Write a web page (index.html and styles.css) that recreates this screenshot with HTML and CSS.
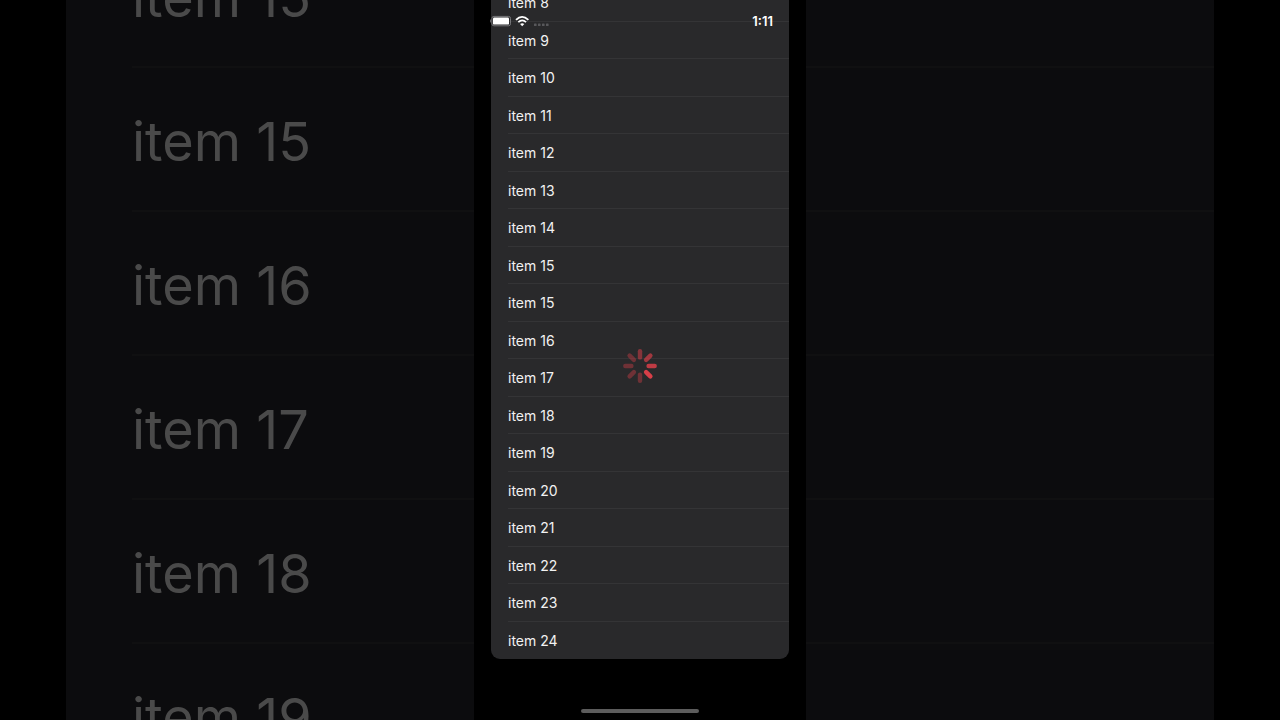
FILE: index.html
```html
<!DOCTYPE html>
<html lang="en">
<head>
    <meta charset="UTF-8">
    <meta name="viewport" content="width=device-width, initial-scale=1">
    <title>List loading</title>
    <link rel="stylesheet" href="styles.css">
</head>
<body>
    <div class="stage">
        <!-- enlarged, dimmed list behind the phone -->
        <ul class="backdrop" aria-hidden="true">
            <li>item 15</li>
            <li>item 15</li>
            <li>item 16</li>
            <li>item 17</li>
            <li>item 18</li>
            <li>item 19</li>
        </ul>

        <main class="phone">
            <ul class="list">
                <li>item 8</li>
                <li>item 9</li>
                <li>item 10</li>
                <li>item 11</li>
                <li>item 12</li>
                <li>item 13</li>
                <li>item 14</li>
                <li>item 15</li>
                <li>item 15</li>
                <li>item 16</li>
                <li>item 17</li>
                <li>item 18</li>
                <li>item 19</li>
                <li>item 20</li>
                <li>item 21</li>
                <li>item 22</li>
                <li>item 23</li>
                <li>item 24</li>
            </ul>

            <div class="status-bar">
                <div class="status-icons">
                    <svg class="battery" width="22" height="12" viewBox="0 0 22 12">
                        <path d="M2 4 Q0 6 2 8 Z" fill="#68686b"/>
                        <rect x="2.9" y="1.4" width="18.6" height="9.4" rx="2" fill="none" stroke="#77777a"/>
                        <rect x="4" y="2.6" width="16" height="7" rx="1.2" fill="#fff"/>
                    </svg>
                    <svg class="wifi" width="14" height="12" viewBox="0 0 14 12">
                        <path d="M1 4.9 Q7 -1.3 13.4 4.9" fill="none" stroke="#fff" stroke-width="1.8"/>
                        <path d="M3.3 7.2 Q7.2 3.5 11.1 7.2" fill="none" stroke="#fff" stroke-width="1.7"/>
                        <path d="M5.1 9 Q7.2 7.3 9.3 9 L7.2 11.2 Z" fill="#fff"/>
                    </svg>
                    <svg class="signal" width="16" height="12" viewBox="0 0 16 12" fill="#58585b">
                        <rect x="1" y="8.4" width="2.6" height="2.6" rx="0.6"/>
                        <rect x="5" y="8.4" width="2.6" height="2.6" rx="0.6"/>
                        <rect x="9" y="8.4" width="2.6" height="2.6" rx="0.6"/>
                        <rect x="13" y="8.4" width="2.6" height="2.6" rx="0.6"/>
                    </svg>
                </div>
                <time>1:11</time>
            </div>

            <svg class="spinner" role="img" aria-label="Loading" viewBox="-17 -17 34 34" stroke="#e0404a" stroke-width="4.4" stroke-linecap="round">
                <path d="M0 -8.6 V-14.7" opacity=".5"/>
                <path d="M0 -8.6 V-14.7" opacity=".65" transform="rotate(45)"/>
                <path d="M0 -8.6 V-14.7" opacity=".82" transform="rotate(90)"/>
                <path d="M0 -8.6 V-14.7" opacity=".96" transform="rotate(135)"/>
                <path d="M0 -8.6 V-14.7" opacity=".38" transform="rotate(180)"/>
                <path d="M0 -8.6 V-14.7" opacity=".38" transform="rotate(225)"/>
                <path d="M0 -8.6 V-14.7" opacity=".38" transform="rotate(270)"/>
                <path d="M0 -8.6 V-14.7" opacity=".38" transform="rotate(315)"/>
            </svg>

            <div class="home-indicator"></div>
        </main>
    </div>
</body>
</html>
```
FILE: styles.css
```css
* {
    box-sizing: border-box;
}
body {
    margin: 0;
    background: #000;
    color: #f2f2f2;
    font-family: Inter, "Liberation Sans", sans-serif;
}
ul {
    list-style: none;
    margin: 0;
    padding: 0;
}
.stage {
    display: grid;
    height: 100vh;
    overflow: hidden;
}
.backdrop,
.phone {
    grid-area: 1 / 1;
}

/* Backdrop */
.backdrop {
    display: grid;
    grid-auto-rows: 144px;
    align-self: start;
    margin: -76px 66px 0;
    background: #0c0c0e;
    color: #4a4a4a;
    font-size: 54px;
}
.backdrop li {
    display: flex;
    align-items: center;
    margin-left: 66px;
    padding-top: 4px;
    border-bottom: 2px solid #101011;
}

/* Phone */
.phone {
    position: relative;
    display: flex;
    flex-direction: column;
    justify-content: flex-end;
    justify-self: center;
    height: 100vh;
    aspect-ratio: 332 / 720;
    padding: 0 17px 61px;
    overflow: hidden;
    background: #000;
}
.list {
    display: grid;
    grid-auto-rows: 38px 37px;
    background: #29292b;
    border-radius: 9px;
    font-size: 14px;
}
.list li {
    display: flex;
    align-items: center;
    margin-left: 17px;
    border-bottom: 1px solid #343436;
}
.list li:last-child {
    border-bottom: 0;
}

/* Things floating over the list */
.status-bar {
    position: absolute;
    top: 12px;
    left: 15px;
    right: 33px;
    display: flex;
    justify-content: space-between;
    align-items: center;
    height: 18px;
    font-size: 13px;
    font-weight: 600;
    color: #fff;
}
.status-icons {
    display: flex;
    align-items: center;
    gap: 4px;
}
.spinner {
    position: absolute;
    top: calc(50% - 11px);
    left: calc(50% - 17px);
    width: 34px;
    height: 34px;
}
.home-indicator {
    position: absolute;
    bottom: 7px;
    left: calc(50% - 59px);
    width: 118px;
    height: 4px;
    border-radius: 2px;
    background: #5c5c5c;
}
```
